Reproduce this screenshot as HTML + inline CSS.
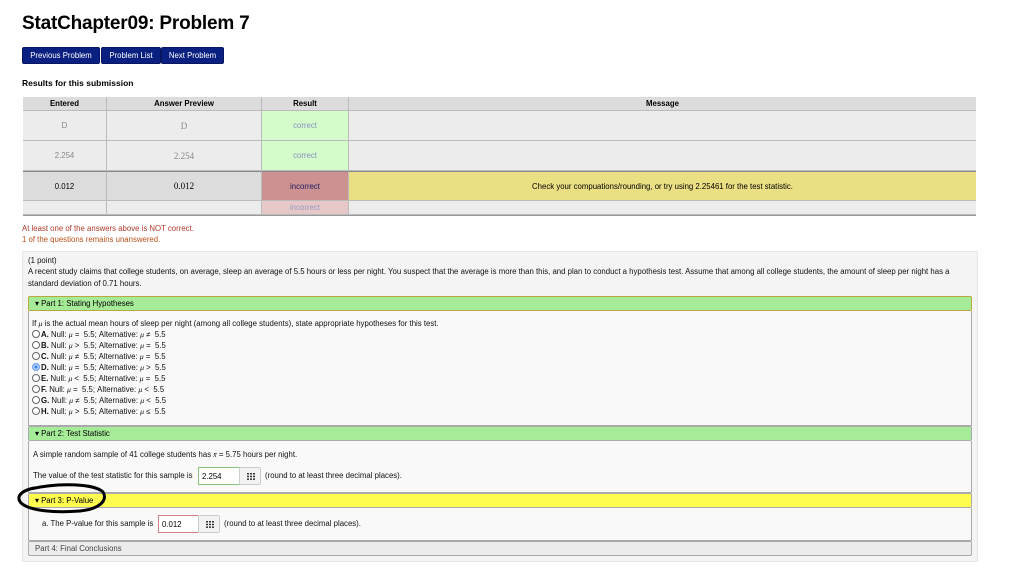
<!DOCTYPE html>
<html><head><meta charset="utf-8"><style>
*{margin:0;padding:0;box-sizing:border-box}
body{width:1024px;height:571px;background:#fff;font-family:"Liberation Sans",sans-serif;position:relative;overflow:hidden;color:#000}
.a{position:absolute;white-space:nowrap}
h1{position:absolute;left:22px;top:13px;font-size:19px;font-weight:bold;letter-spacing:-0.2px}
.btn{position:absolute;top:47px;height:17px;background:#0a2080;color:#fff;font-size:7.8px;border-radius:2px;text-align:center;line-height:16px;border:1px solid #061660}
.c{position:absolute;font-size:7.8px;text-align:center;border-right:1px solid #bbb;border-bottom:1px solid #bbb}
.hdr{background:#dcdcdc;font-weight:bold;color:#000}
.g{background:#ececec}
.ser{font-family:"Liberation Serif",serif;font-size:9px}
.ph{position:absolute;left:28px;width:944px;height:15px;font-size:7.8px;line-height:14px;padding-left:6px;border:1px solid #aaa;border-radius:2px}
.pb{position:absolute;left:28px;width:944px;background:#f9f9f9;border:1px solid #aaa;border-top:none}
.t{font-size:7.8px;color:#111}
.rad{display:inline-block;width:8px;height:8px;border:1px solid #666;border-radius:50%;vertical-align:-1px;margin-right:1px;background:#fff}
.m{font-family:"Liberation Serif",serif;font-style:italic}
.inp{position:absolute;height:18px;background:#fff;font-size:7.8px;line-height:17px;padding-left:3px}
.gb{position:absolute;height:18px;border:1px solid #ccc;border-radius:0 2px 2px 0;background:#f2f2f2}
.gb svg{position:absolute;left:7px;top:5px}
.hl{height:11px;line-height:11px}
</style></head><body>
<h1>StatChapter09: Problem 7</h1>
<div class="btn" style="left:22px;width:78px">Previous Problem</div>
<div class="btn" style="left:101px;width:60px">Problem List</div>
<div class="btn" style="left:161px;width:63px">Next Problem</div>
<div class="a" style="left:22px;top:78px;font-size:8.5px;font-weight:bold">Results for this submission</div>

<div style="position:absolute;left:23px;top:97px;width:953px;height:119px;border:1px solid #999;background:#ececec"></div>
<div class="c hdr" style="left:23px;top:97px;width:84px;height:14px;line-height:14px">Entered</div>
<div class="c hdr" style="left:107px;top:97px;width:155px;height:14px;line-height:14px">Answer Preview</div>
<div class="c hdr" style="left:262px;top:97px;width:87px;height:14px;line-height:14px">Result</div>
<div class="c hdr" style="left:349px;top:97px;width:627px;height:14px;line-height:14px;border-right:none">Message</div>

<div class="c g" style="left:23px;top:111px;width:84px;height:30px;line-height:30px;color:#888">D</div>
<div class="c g ser" style="left:107px;top:111px;width:155px;height:30px;line-height:30px;color:#888">D</div>
<div class="c" style="left:262px;top:111px;width:87px;height:30px;line-height:30px;background:#d4fcca;color:#8890c0">correct</div>
<div class="c g" style="left:349px;top:111px;width:627px;height:30px;border-right:none"></div>

<div class="c g" style="left:23px;top:141px;width:84px;height:30px;line-height:30px;color:#888">2.254</div>
<div class="c g ser" style="left:107px;top:141px;width:155px;height:30px;line-height:30px;color:#888">2.254</div>
<div class="c" style="left:262px;top:141px;width:87px;height:30px;line-height:30px;background:#d4fcca;color:#8890c0">correct</div>
<div class="c g" style="left:349px;top:141px;width:627px;height:30px;border-right:none"></div>

<div class="c" style="left:23px;top:171px;width:84px;height:30px;line-height:29px;background:#dcdcdc;border-top:1px solid #888">0.012</div>
<div class="c ser" style="left:107px;top:171px;width:155px;height:30px;line-height:28px;background:#dcdcdc;border-top:1px solid #888">0.012</div>
<div class="c" style="left:262px;top:171px;width:87px;height:30px;line-height:29px;background:#cc9190;color:#202060;border-top:1px solid #888">incorrect</div>
<div class="c" style="left:349px;top:171px;width:627px;height:30px;line-height:29px;background:#ebdf84;border-right:none;border-top:1px solid #888">Check your compuations/rounding, or try using 2.25461 for the test statistic.</div>

<div class="c g" style="left:23px;top:201px;width:84px;height:14px"></div>
<div class="c g" style="left:107px;top:201px;width:155px;height:14px"></div>
<div class="c" style="left:262px;top:201px;width:87px;height:14px;line-height:14px;background:#e6c8c8;color:#9a9ac0">incorrect</div>
<div class="c g" style="left:349px;top:201px;width:627px;height:14px;border-right:none"></div>

<div class="a" style="left:22px;top:224px;font-size:7.8px;color:#b03a2a">At least one of the answers above is NOT correct.</div>
<div class="a" style="left:22px;top:235px;font-size:7.8px;color:#b8501a">1 of the questions remains unanswered.</div>

<div style="position:absolute;left:22px;top:251px;width:956px;height:311px;background:#f4f4f4;border:1px solid #e4e4e4;border-radius:2px"></div>
<div class="a t" style="left:28px;top:256px">(1 point)</div>
<div class="a t" style="left:28px;top:267px">A recent study claims that college students, on average, sleep an average of 5.5 hours or less per night. You suspect that the average is more than this, and plan to conduct a hypothesis test. Assume that among all college students, the amount of sleep per night has a</div>
<div class="a t" style="left:28px;top:279px">standard deviation of 0.71 hours.</div>

<div class="ph" style="top:296px;background:#a6eb98;border-color:#b8a840">▾ Part 1: Stating Hypotheses</div>
<div class="pb" style="top:311px;height:115px"></div>
<div class="a t" style="left:32px;top:318px">
<div class="hl">If <span class="m">μ</span> is the actual mean hours of sleep per night (among all college students), state appropriate hypotheses for this test.</div>
<div class="hl"><span class="rad"></span><b>A.</b> Null: <span class="m">μ</span> =&nbsp; 5.5; Alternative: <span class="m">μ</span> ≠&nbsp; 5.5</div>
<div class="hl"><span class="rad"></span><b>B.</b> Null: <span class="m">μ</span> &gt;&nbsp; 5.5; Alternative: <span class="m">μ</span> =&nbsp; 5.5</div>
<div class="hl"><span class="rad"></span><b>C.</b> Null: <span class="m">μ</span> ≠&nbsp; 5.5; Alternative: <span class="m">μ</span> =&nbsp; 5.5</div>
<div class="hl"><span class="rad" style="background:#3a7ee8;border-color:#6a9ef0;box-shadow:inset 0 0 0 1.5px #bcd4fa"></span><b>D.</b> Null: <span class="m">μ</span> =&nbsp; 5.5; Alternative: <span class="m">μ</span> &gt;&nbsp; 5.5</div>
<div class="hl"><span class="rad"></span><b>E.</b> Null: <span class="m">μ</span> &lt;&nbsp; 5.5; Alternative: <span class="m">μ</span> =&nbsp; 5.5</div>
<div class="hl"><span class="rad"></span><b>F.</b> Null: <span class="m">μ</span> =&nbsp; 5.5; Alternative: <span class="m">μ</span> &lt;&nbsp; 5.5</div>
<div class="hl"><span class="rad"></span><b>G.</b> Null: <span class="m">μ</span> ≠&nbsp; 5.5; Alternative: <span class="m">μ</span> &lt;&nbsp; 5.5</div>
<div class="hl"><span class="rad"></span><b>H.</b> Null: <span class="m">μ</span> &gt;&nbsp; 5.5; Alternative: <span class="m">μ</span> ≤&nbsp; 5.5</div>
</div>

<div class="ph" style="top:426px;background:#a6eb98">▾ Part 2: Test Statistic</div>
<div class="pb" style="top:441px;height:52px"></div>
<div class="a t" style="left:33px;top:450px">A simple random sample of 41 college students has <span class="m">x̄</span> = 5.75 hours per night.</div>
<div class="a t" style="left:33px;top:471px">The value of the test statistic for this sample is</div>
<div class="inp" style="left:198px;top:467px;width:42px;border:1px solid #8ac080">2.254</div>
<div class="gb" style="left:239px;top:467px;width:22px"><svg width="8" height="7"><g fill="#333"><rect x="0" y="0" width="2" height="1.5"/><rect x="3" y="0" width="2" height="1.5"/><rect x="6" y="0" width="2" height="1.5"/><rect x="0" y="2.7" width="2" height="1.5"/><rect x="3" y="2.7" width="2" height="1.5"/><rect x="6" y="2.7" width="2" height="1.5"/><rect x="0" y="5.4" width="2" height="1.5"/><rect x="3" y="5.4" width="2" height="1.5"/><rect x="6" y="5.4" width="2" height="1.5"/></g></svg></div>
<div class="a t" style="left:265px;top:471px">(round to at least three decimal places).</div>

<div class="ph" style="top:493px;background:#fffc50">▾ Part 3: P-Value</div>
<div class="pb" style="top:508px;height:33px"></div>
<div class="a t" style="left:42px;top:519px">a. The P-value for this sample is</div>
<div class="inp" style="left:158px;top:515px;width:41px;border:1px solid #d08080">0.012</div>
<div class="gb" style="left:198px;top:515px;width:22px"><svg width="8" height="7"><g fill="#333"><rect x="0" y="0" width="2" height="1.5"/><rect x="3" y="0" width="2" height="1.5"/><rect x="6" y="0" width="2" height="1.5"/><rect x="0" y="2.7" width="2" height="1.5"/><rect x="3" y="2.7" width="2" height="1.5"/><rect x="6" y="2.7" width="2" height="1.5"/><rect x="0" y="5.4" width="2" height="1.5"/><rect x="3" y="5.4" width="2" height="1.5"/><rect x="6" y="5.4" width="2" height="1.5"/></g></svg></div>
<div class="a t" style="left:224px;top:519px">(round to at least three decimal places).</div>

<div class="ph" style="top:541px;background:#ececec;color:#444">Part 4: Final Conclusions</div>

<svg style="position:absolute;left:0;top:0" width="1024" height="571"><path d="M30 489 C60 482 95 484 103 492 C108 500 100 509 80 511 C55 513 30 511 21 503 C16 497 20 491 34 488" fill="none" stroke="#000" stroke-width="3" stroke-linecap="round"/></svg>
</body></html>
